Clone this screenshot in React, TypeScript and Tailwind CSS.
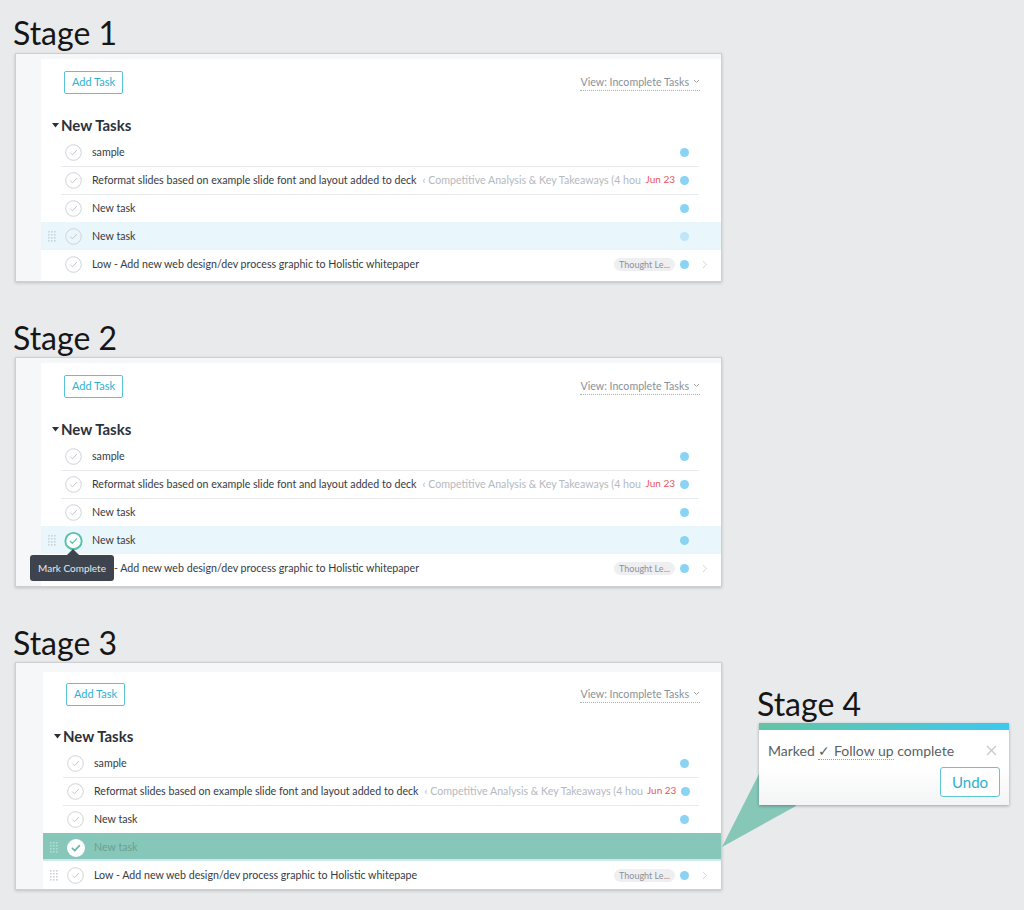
import React from "react";

type Task = {
  text: string;
  project?: string;
  date?: string;
  tag?: string;
  chevron?: boolean;
};

type RowState = "plain" | "hover" | "hoverCheck" | "done" | "handle";

const baseTasks: Task[] = [
  { text: "sample" },
  {
    text: "Reformat slides based on example slide font and layout added to deck",
    project: "‹ Competitive Analysis & Key Takeaways (4 hou",
    date: "Jun 23",
  },
  { text: "New task" },
  { text: "New task" },
  {
    text: "Low - Add new web design/dev process graphic to Holistic whitepaper",
    tag: "Thought Le...",
    chevron: true,
  },
];

const DragHandle = ({ light }: { light?: boolean }) => (
  <svg width="9" height="11" viewBox="0 0 9 11">
    {[0, 1, 2, 3].map((r) =>
      [0, 1, 2].map((c) => (
        <rect
          key={`${r}-${c}`}
          x={c * 3}
          y={r * 3}
          width="1.6"
          height="1.6"
          fill={light ? "#b4ddd3" : "#ced2d7"}
        />
      ))
    )}
  </svg>
);

const CheckCircle = ({ state }: { state: "plain" | "active" | "done" }) => {
  if (state === "active") {
    return (
      <svg width="20" height="20" viewBox="0 0 20 20">
        <circle cx="10" cy="10" r="8.6" fill="white" stroke="#55c1a9" strokeWidth="2" />
        <path d="M6.6 10.3l2.2 2.2 4.4-4.8" fill="none" stroke="#55c1a9" strokeWidth="1.3" strokeLinecap="round" strokeLinejoin="round" />
      </svg>
    );
  }
  if (state === "done") {
    return (
      <svg width="18" height="18" viewBox="0 0 18 18">
        <circle cx="9" cy="9" r="9" fill="white" />
        <path d="M5.4 9.3l2.4 2.4 4.6-5" fill="none" stroke="#6bbcab" strokeWidth="1.8" strokeLinecap="round" strokeLinejoin="round" />
      </svg>
    );
  }
  return (
    <svg width="17" height="17" viewBox="0 0 17 17">
      <circle cx="8.5" cy="8.5" r="7.8" fill="none" stroke="#cfd2d6" strokeWidth="1" />
      <path d="M5.5 8.8l2 2 4-4.4" fill="none" stroke="#c3c6cb" strokeWidth="1" strokeLinecap="round" strokeLinejoin="round" />
    </svg>
  );
};

const Tooltip = () => (
  <div className="absolute left-[-11px] top-[29px] z-20">
    <svg className="absolute left-[37px] top-[-6px]" width="12" height="6" viewBox="0 0 12 6">
      <polygon points="0,6 6,0 12,6" fill="#3e444e" />
    </svg>
    <div className="w-[84px] h-[26px] rounded-[3px] bg-[#3e444e] flex items-center justify-center text-[10px] text-[#e6e8eb] whitespace-nowrap">
      Mark Complete
    </div>
  </div>
);

function TaskRow({
  task,
  state,
  first,
  afterHighlight,
}: {
  task: Task;
  state: RowState;
  first: boolean;
  afterHighlight: boolean;
}) {
  const highlighted = state === "hover" || state === "hoverCheck" || state === "done";
  const bg =
    state === "done"
      ? "bg-[#87c7b9] shadow-[inset_0_-2px_0_#cde8f1]"
      : state === "hover" || state === "hoverCheck"
      ? "bg-[#e9f6fc]"
      : "bg-white";
  const borderColor =
    first || highlighted || afterHighlight ? "border-transparent" : "border-[#e7e9ec]";
  const showHandle = state !== "plain";
  const checkState = state === "hoverCheck" ? "active" : state === "done" ? "done" : "plain";

  return (
    <div className={`relative flex h-[28px] ${bg}`}>
      <div className="w-[20px] flex items-center pl-[7px]">
        {showHandle && <DragHandle light={state === "done"} />}
      </div>
      <div className={`flex-1 min-w-0 flex items-center border-t ${borderColor}`}>
        <div className="ml-[3px] w-[19px] h-[19px] flex items-center justify-center shrink-0">
          <CheckCircle state={checkState} />
        </div>
        <span
          className={`ml-[9px] shrink-0 whitespace-nowrap text-[10.65px] pb-[2px] ${
            state === "done" ? "text-[#6a9f94]" : "text-[#363b44]"
          }`}
        >
          {task.text}
        </span>
        {task.project && (
          <span className="ml-[6px] shrink-0 whitespace-nowrap text-[10.65px] pb-[2px] text-[#b5b9bf]">
            {task.project}
          </span>
        )}
        <div className="flex-1" />
        {task.date && (
          <span className="ml-[4px] shrink-0 text-[10px] pb-[2px] text-[#f0535b]">{task.date}</span>
        )}
        {task.tag && (
          <span className="shrink-0 h-[13px] px-[5px] rounded-full bg-[#efeff1] text-[9px] leading-[13px] text-[#8d9197]">
            {task.tag}
          </span>
        )}
        <span
          className={`ml-[5px] mr-[10px] shrink-0 w-[9px] h-[9px] rounded-full ${
            state === "done"
              ? "bg-transparent"
              : state === "hover"
              ? "bg-[#bfe5f6]"
              : "bg-[#8bd3f2]"
          }`}
        />
      </div>
      <div className="w-[22px] flex items-center pl-[3px]">
        {task.chevron && (
          <svg width="6" height="9" viewBox="0 0 6 9">
            <path d="M1 1l3.5 3.5L1 8" fill="none" stroke="#d3d6da" strokeWidth="1" />
          </svg>
        )}
      </div>
      {state === "hoverCheck" && <Tooltip />}
    </div>
  );
}

function Panel({ stage }: { stage: 1 | 2 | 3 }) {
  const s3 = stage === 3;
  const states: RowState[] =
    stage === 1
      ? ["plain", "plain", "plain", "hover", "plain"]
      : stage === 2
      ? ["plain", "plain", "plain", "hoverCheck", "plain"]
      : ["plain", "plain", "plain", "done", "handle"];
  const tasks = baseTasks.map((t, i) =>
    s3 && i === 4
      ? { ...t, text: "Low - Add new web design/dev process graphic to Holistic whitepape" }
      : t
  );

  return (
    <div
      className={`w-[707px] bg-[#f6f7f9] border border-[#cdd0d3] shadow-[0_1px_3px_rgba(0,0,0,0.18)] ${
        s3 ? "mt-[1px] pt-[9px] pl-[27px]" : stage === 1 ? "mt-[2px] pt-[5px] pl-[25px]" : "mt-[1px] pt-[5px] pl-[25px]"
      }`}
    >
      <div className={`bg-white ${stage === 1 ? "pb-[3px]" : stage === 2 ? "pb-[4px]" : "pb-0"}`}>
        <div
          className={`flex items-center justify-between pl-[23px] pr-[21px] ${
            s3 ? "pt-[11px]" : "pt-[12px]"
          }`}
        >
          <button className="w-[59px] h-[23px] border border-[#58c3d6] rounded-[2px] text-[11px] text-[#2db2cf] bg-white">
            Add Task
          </button>
          <div className="flex items-center gap-[4px] border-b border-dotted border-[#aeb2b8] pb-[1px] text-[10.65px] text-[#8b9098]">
            <span>View: Incomplete Tasks</span>
            <svg width="7" height="5" viewBox="0 0 7 5">
              <path d="M1 1l2.5 2.5L6 1" fill="none" stroke="#9ba0a7" strokeWidth="1" />
            </svg>
          </div>
        </div>
        <div className={`${s3 ? "mt-[19px]" : "mt-[20px]"} h-[22px] flex items-center pl-[11px]`}>
          <svg width="7" height="5" viewBox="0 0 7 5">
            <polygon points="0,0 7,0 3.5,4.5" fill="#2b313b" />
          </svg>
          <span className="ml-[2px] text-[15px] font-bold text-[#2b313b]">New Tasks</span>
        </div>
        <div className="mt-[2px]">
          {tasks.map((t, i) => (
            <TaskRow
              key={i}
              task={t}
              state={states[i]}
              first={i === 0}
              afterHighlight={i > 0 && states[i - 1] !== "plain" && states[i - 1] !== "handle"}
            />
          ))}
        </div>
      </div>
    </div>
  );
}

const StageTitle = ({ children, className = "" }: { children: React.ReactNode; className?: string }) => (
  <div
    className={`h-[36px] leading-[36px] -ml-[2px] text-[32px] text-[#161616] font-['Lato',sans-serif] whitespace-nowrap ${className}`}
  >
    {children}
  </div>
);

function Toast() {
  return (
    <div className="relative z-10 mt-[1px] w-[250px] bg-white shadow-[0_1px_3px_rgba(0,0,0,0.3)]">
      <div className="h-[7px] bg-linear-to-r from-[#63c4a1] to-[#3cc8ef]" />
      <div className="px-[9px] pt-[11px] pb-[8px] bg-linear-to-b from-white via-white to-[#f3f4f5]">
        <div className="flex items-center justify-between h-[18px]">
          <span className="text-[14px] text-[#5a5f67] whitespace-nowrap">
            Marked{" "}
            <span className="border-b border-dotted border-[#9aa0a7]">✓ Follow up</span>{" "}
            complete
          </span>
          <svg className="mr-[3px]" width="11" height="11" viewBox="0 0 11 11">
            <path d="M1 1l9 9M10 1l-9 9" stroke="#c5c8cc" strokeWidth="1.3" />
          </svg>
        </div>
        <div className="flex justify-end mt-[8px]">
          <button className="w-[60px] h-[30px] border border-[#5fc6d8] rounded-[3px] text-[15px] text-[#2cafd2] bg-white">
            Undo
          </button>
        </div>
      </div>
    </div>
  );
}

export default function App() {
  return (
    <div className="relative w-[1024px] h-[910px] bg-[#e9eaec] overflow-hidden flex font-['Lato',sans-serif]">
      <svg className="absolute left-0 top-0 pointer-events-none z-0" width="1024" height="910">
        <polygon points="722,847 762,768 796,806" fill="#86c7b8" />
      </svg>
      <div className="relative z-[1] pl-[15px] w-[722px] flex flex-col">
        <StageTitle className="mt-[15px]">Stage 1</StageTitle>
        <Panel stage={1} />
        <StageTitle className="mt-[38px]">Stage 2</StageTitle>
        <Panel stage={2} />
        <StageTitle className="mt-[38px]">Stage 3</StageTitle>
        <Panel stage={3} />
      </div>
      <div className="relative z-[1] ml-[37px] w-[250px] pt-[686px]">
        <StageTitle>Stage 4</StageTitle>
        <Toast />
      </div>
    </div>
  );
}
